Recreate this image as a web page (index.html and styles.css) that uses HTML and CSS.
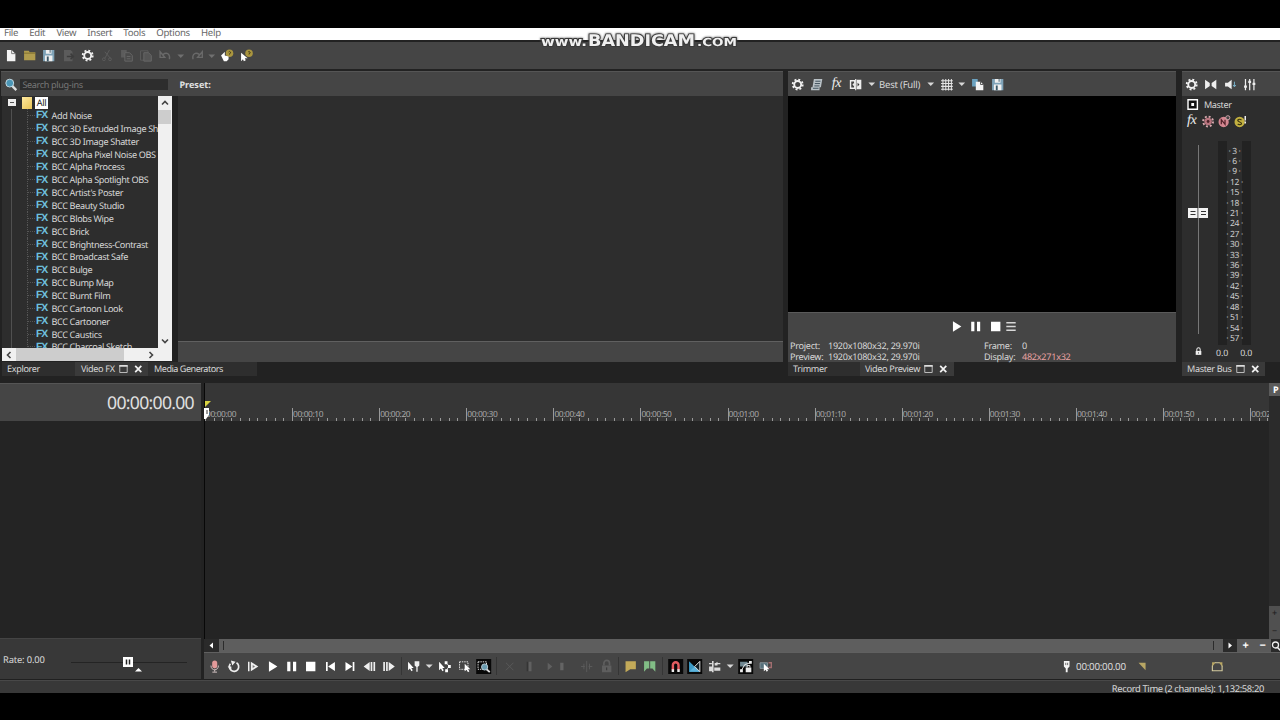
FILE: index.html
```
<!DOCTYPE html>
<html lang="en">
  <head>
    <meta charset="utf-8">
    <title>Video Editor</title>
    <link rel="stylesheet" href="styles.css">
  </head>
  <body>
    <!-- icon set -->
    <svg class="sprite">
      <symbol id="new" viewBox="0 0 16 16"><path d="M4 2h5l4 4v8H4z" fill="#f4f4f4"/><path d="M9 2v4h4" fill="none" stroke="#777"/></symbol>
      <symbol id="open" viewBox="0 0 16 16"><path d="M2 3h5l1 1.500h6V13H2z" fill="#b09c4e"/><path d="M2 5.500h12" stroke="#7d6d2e"/></symbol>
      <symbol id="save" viewBox="0 0 16 16"><path d="M2 2h12v12H2z" fill="#7fa3b8"/><path d="M5 2h6v4H5zM4 8h8v6H4z" fill="#f0f0f0"/><path d="M6 9h2v5H6zM9 2h1v3H9z" fill="#3a5868"/></symbol>
      <symbol id="props" viewBox="0 0 16 16"><path d="M3 2h7l2 2v10H3z" fill="#5c5c5c"/><path d="M6 9h7M10 6l3 3-3 3" fill="none" stroke="#3c3c3c" stroke-width="1.600"/></symbol>
      <symbol id="gear" viewBox="0 0 16 16"><circle cx="8" cy="8" r="3.700" fill="none" stroke="#f2f2f2" stroke-width="2"/><circle cx="8" cy="8" r="5.300" fill="none" stroke="#f2f2f2" stroke-width="2" stroke-dasharray="2.080 2.080"/></symbol>
      <symbol id="cut" viewBox="0 0 16 16"><path d="M11 2 6 11M6 4l6 7" stroke="#5c5c5c" fill="none"/><circle cx="5" cy="12" r="1.500" fill="none" stroke="#5c5c5c"/><circle cx="11.500" cy="12" r="1.500" fill="none" stroke="#5c5c5c"/></symbol>
      <symbol id="copy" viewBox="0 0 16 16"><path d="M2 2h6v8H2z" fill="#5c5c5c"/><path d="M6 5h5l3 3v6H6z" fill="#4a4a4a" stroke="#686868"/><path d="M8 9h4M8 11.500h4" stroke="#686868"/></symbol>
      <symbol id="paste" viewBox="0 0 16 16"><path d="M2.500 3h8v10h-8z" fill="none" stroke="#5c5c5c"/><path d="M6 5h5l3 3v6H6z" fill="#555" stroke="#686868"/></symbol>
      <symbol id="undo" viewBox="0 0 16 16"><path d="M2 4v6h5zM5 7c4-3 8-1 7 5" fill="none" stroke="#696969" stroke-width="1.500"/></symbol>
      <symbol id="redo" viewBox="0 0 16 16"><path d="M14 4v6H9zM11 7c-4-3-8-1-7 5" fill="none" stroke="#696969" stroke-width="1.500"/></symbol>
      <symbol id="hand" viewBox="0 0 16 16"><circle cx="11" cy="5.500" r="4" fill="#a9953f"/><path d="M10 4.300q1-1.300 2 0T11 6v1" fill="none" stroke="#4b4018"/><path d="M2 8l3-3 1-1v4l4 1v3l-2 2H5z" fill="#fff"/></symbol>
      <symbol id="whats" viewBox="0 0 16 16"><circle cx="10.500" cy="5.500" r="4" fill="#a9953f"/><path d="M9.500 4.300q1-1.300 2 0T10.500 6v1" fill="none" stroke="#4b4018"/><path d="M2 5v9l2-2 1 2 2-1-1-2h3z" fill="#fff"/></symbol>
      <symbol id="caret" viewBox="0 0 12 16"><path d="M2.500 6.500h7L6 10z"/></symbol>
      <symbol id="search" viewBox="0 0 16 16"><path d="m9 9 5 5" stroke="#ddd" stroke-width="2.500"/><circle cx="7" cy="6.500" r="4.200" fill="#4b96b6" stroke="#c8dde6"/></symbol>
      <symbol id="script" viewBox="0 0 16 16"><path d="M5 2h9l-1.500 9H11v3H2v-3h1.500z" fill="#b9c1c6"/><path d="M6.500 4.500h5.500M6 7h5.500M5.500 9.500H11M4 12h6" stroke="#394a55"/></symbol>
      <symbol id="split" viewBox="0 0 16 16"><path d="M2.500 4H7v8H2.500z" fill="none" stroke="#eee" stroke-width="1.500"/><path d="M9 3h5v10H9z" fill="#eee"/><path d="M8 2v12" stroke="#eee" stroke-width="1.200"/><path d="m10 6 2 2-2 2z" fill="#333"/><path d="m6.500 6-2 2 2 2z" fill="#eee"/></symbol>
      <symbol id="grid" viewBox="0 0 16 16"><path d="M4 2v12.500M7 2v12.500M10 2v12.500M13 2v12.500M2 4h12.500M2 7h12.500M2 10h12.500M2 13h12.500" stroke="#e4e4e4" stroke-width="1.100"/></symbol>
      <symbol id="snap" viewBox="0 0 16 16"><path d="M2 2h6v8H2z" fill="#6ba2c0"/><path d="M6 5h5l3 3v6H6z" fill="#f3f3f3"/><path d="M11 5v3h3" fill="none" stroke="#555"/></symbol>
      <symbol id="downmix" viewBox="0 0 16 16"><path d="m2 3 5 3.500v3L2 13zM14 3 9 6.500v3l5 3.500z" fill="#eee"/></symbol>
      <symbol id="dim" viewBox="0 0 16 16"><path d="M2 6h3l4-3v10L5 10H2z" fill="#eee"/><path d="M12 5v5M10.500 8.500l1.500 2 1.500-2" fill="none" stroke="#7bb6d0"/></symbol>
      <symbol id="mixer" viewBox="0 0 16 16"><path d="M3.500 2v12M8 2v12M12.500 2v12" stroke="#eee" stroke-width="1.300"/><path d="M2 9h3v2.500H2zM6.500 4h3v2.500h-3zM11 6h3v2.500h-3z" fill="#eee"/></symbol>
      <symbol id="bus" viewBox="0 0 16 16"><path d="M3 3h10v10H3z" fill="#111" stroke="#fff" stroke-width="1.500"/><path d="M6.500 6.500h3v3h-3z" fill="#fff"/></symbol>
      <symbol id="play" viewBox="0 0 16 16"><path d="M4 2.500 13 8l-9 5.500z" fill="#fff"/></symbol>
      <symbol id="pause" viewBox="0 0 16 16"><path d="M3.200 3h3.400v10H3.200zM9.400 3h3.400v10H9.400z" fill="#fff"/></symbol>
      <symbol id="stop" viewBox="0 0 16 16"><path d="M3 3h10v10H3z" fill="#fff"/></symbol>
      <symbol id="menu" viewBox="0 0 12 16"><path d="M1 4h10M1 8h10M1 12h10" stroke="#d8d8d8" stroke-width="1.800"/></symbol>
      <symbol id="max" viewBox="0 0 16 16"><path d="M4 4h8.500v8H4z" fill="none" stroke="#ccc"/><path d="M3.500 4.500h9.500" stroke="#ddd" stroke-width="2"/></symbol>
      <symbol id="close" viewBox="0 0 16 16"><path d="m4.500 4.500 7 7m0-7-7 7" stroke="#f2f2f2" stroke-width="2"/></symbol>
      <symbol id="lock" viewBox="0 0 16 16"><path d="M3 7h10v7H3z" fill="currentColor"/><path d="M5 7V4.500a3 3 0 0 1 6 0V7" fill="none" stroke="currentColor" stroke-width="1.800"/><path d="M8 9v3" stroke="#333"/></symbol>
      <symbol id="mic" viewBox="0 0 16 16"><rect x="5.300" y="1.500" width="5.400" height="8.500" rx="2.700" fill="#e29a9a"/><path d="M4 7c0 6 8 6 8 0M8 11.500v2M5.500 14h5" fill="none" stroke="#d8c8c8"/></symbol>
      <symbol id="loop" viewBox="0 0 16 16"><path d="M11 4a5 5 0 1 1-6.500 1" fill="none" stroke="#eee" stroke-width="1.800"/><path d="m5 1.500 5 1.500-3.500 4zM1.500 8h4v4z" fill="#eee"/></symbol>
      <symbol id="playstart" viewBox="0 0 16 16"><path d="M3 3h1.600v10H3zM6 3l8 5-8 5z" fill="#eee"/><path d="m8 6.500 2.500 1.500L8 9.500z" fill="#777"/></symbol>
      <symbol id="tostart" viewBox="0 0 16 16"><path d="M3 3.200h1.800v9.600H3zM12.500 3.200v9.600L5.200 8z" fill="#fff"/></symbol>
      <symbol id="toend" viewBox="0 0 16 16"><path d="M11.200 3.200H13v9.600h-1.800zM3.500 3.200v9.600L10.800 8z" fill="#fff"/></symbol>
      <symbol id="prev" viewBox="0 0 16 16"><path d="M8 3.200v9.600L1.500 8zM9 3.200h1.800v9.600H9zM12 3.200h1.800v9.600H12z" fill="#eee"/></symbol>
      <symbol id="next" viewBox="0 0 16 16"><path d="M8 3.200v9.600L14.500 8zM2.200 3.200H4v9.600H2.200zM5.200 3.200H7v9.600H5.200z" fill="#eee"/></symbol>
      <symbol id="edit" viewBox="0 0 16 16"><path d="M2 3v9l2-2 1.500 3 1.500-1-1.500-2.500H8z" fill="#fff"/><path d="M9 2.500h5V7l-1.800 1.500v5h-1.400v-5L9 7z" fill="#eee"/></symbol>
      <symbol id="env" viewBox="0 0 16 16"><path d="M2 3v9l2-2 1.500 3 1.500-1-1.500-2.500H8z" fill="#fff"/><path d="m9 4 4 3.500-3 4" fill="none" stroke="#ccc"/><path d="M8 2.500h3v3H8zM11.500 6.500h3v3h-3zM8.500 11h3v3h-3z" fill="#fff"/></symbol>
      <symbol id="select" viewBox="0 0 16 16"><path d="M2.500 3h9v8h-9z" fill="none" stroke="#eee" stroke-dasharray="1.500 1"/><path d="M8 5v8l2-1.500 1.500 2.500 1.500-1-1.500-2H14z" fill="#fff"/></symbol>
      <symbol id="zoomtool" viewBox="0 0 16 16"><path d="M0 0h16v16H0z" fill="#080808"/><path d="M2 3h9v8H2z" fill="none" stroke="#eee" stroke-dasharray="1.500 1"/><path d="m11 11 3.500 3" stroke="#ddd" stroke-width="2"/><circle cx="9" cy="8.500" r="3.300" fill="#6a9cb0" stroke="#b9ccd5"/></symbol>
      <symbol id="del" viewBox="0 0 16 16"><path d="m4 4 8 8m0-8-8 8" stroke="#5a5a5a"/></symbol>
      <symbol id="trimstart" viewBox="0 0 16 16"><path d="M8 3h3v10H8z" fill="#606060"/><path d="M6.500 3v10" stroke="#303030"/></symbol>
      <symbol id="trimend" viewBox="0 0 16 16"><path d="m8 4 5 4-5 4z" fill="#606060"/></symbol>
      <symbol id="trimmid" viewBox="0 0 16 16"><path d="M0 4h3.500v8H0z" fill="#646464"/></symbol>
      <symbol id="splitev" viewBox="0 0 16 16"><path d="M8 2v12M2 8h4M10 8h4M5 5v6M11 5v6" stroke="#5c5c5c"/></symbol>
      <symbol id="marker" viewBox="0 0 16 16"><path d="M2.500 2.500h11v8.500H7.500l-5 3z" fill="#c3aa59"/></symbol>
      <symbol id="region" viewBox="0 0 16 16"><path d="M2 2.500h5.500V10H5l-3 3.500zM8.500 2.500H14v11L11 10H8.500z" fill="#82bd86"/></symbol>
      <symbol id="magnet" viewBox="0 0 16 16"><path d="M0 0h16v16H0z" fill="#080808"/><path d="M5 12V6.500a3 3 0 0 1 6 0V12" fill="none" stroke="#e25c60" stroke-width="2.600"/><path d="M3.700 11h2.600v2.800H3.700zM9.700 11h2.600v2.800H9.700z" fill="#eee"/></symbol>
      <symbol id="fade" viewBox="0 0 16 16"><path d="M0 0h16v16H0z" fill="#080808"/><path d="M2 2.500 13.500 13.500H2z" fill="#3d9bc6"/><path d="M2 13.500 8 8l5.500 5.500z" fill="#5db4dc"/><path d="M13.500 2.500 8 8l5.500 5.500z" fill="#0d1b22" stroke="#eee"/></symbol>
      <symbol id="ripple" viewBox="0 0 16 16"><path d="M6 2v12" stroke="#eee" stroke-width="1.500"/><path d="M2 8h4v5H2zM7.500 9H14v3.500H7.500zM11 3v4H8V5z" fill="#ddd"/><path d="M8 5h6M2 5h3" stroke="#ddd" stroke-width="1.300"/></symbol>
      <symbol id="lockenv" viewBox="0 0 16 16"><path d="M0 0h16v16H0z" fill="#080808"/><path d="M2 3h8v5H2z" fill="#6f8791"/><path d="m3 13 4-7 6-2" fill="none" stroke="#eee"/><path d="M2 11h3v3H2zM11.500 2h3v3h-3zM8 9h6v5H8z" fill="#eee"/><path d="M9.500 9V7h3v2" fill="none" stroke="#eee"/></symbol>
      <symbol id="ignore" viewBox="0 0 16 16"><path d="M2 4h8v6H2z" fill="#56707b" stroke="#87949b"/><path d="M11 4h3v5h-3" fill="none" stroke="#a26e70" stroke-width="1.500"/><path d="M6 5v8l2-1.500 1 2 1.500-1L9.500 11H12z" fill="#fff"/></symbol>
      <symbol id="pin" viewBox="0 0 16 16"><path d="M5 2h6v6L9 10v4H7v-4L5 8z" fill="#f4f4f4"/><path d="M7 4v2.500M9 4v2.500" stroke="#666"/></symbol>
      <symbol id="selstart" viewBox="0 0 16 16"><path d="M2.500 4H10v8z" fill="#b8a664"/></symbol>
      <symbol id="sellen" viewBox="0 0 16 16"><path d="M2 3.500h4L2 8.500zM13 3.500H9l4 5z" fill="#b8a664"/><path d="M5 4h5M2.300 7v5.500h10.400V7" fill="none" stroke="#d3ca9e" stroke-width="1.200"/></symbol>
      <symbol id="fader" viewBox="0 0 20 10"><path d="M0 0h9.500v10H0zM10.500 0H20v10h-9.500z" fill="#f2f2f2"/><path d="M2.500 3.500h5M2.500 6.500h5M13 3.500h5M13 6.500h5" stroke="#333"/></symbol>
      <symbol id="auto" viewBox="0 0 16 16"><circle cx="8" cy="8" r="4" fill="#b6737d"/><circle cx="8" cy="8" r="5.300" fill="none" stroke="#d9a8af" stroke-width="2" stroke-dasharray="2.080 2.080"/><circle cx="8" cy="8" r="1.500" fill="#4a2228"/></symbol>
      <symbol id="mute" viewBox="0 0 16 16"><circle cx="7.500" cy="8.500" r="5.500" fill="#d48791"/><path d="M5 11V6l4 5V6" fill="none" stroke="#502028" stroke-width="1.300"/><circle cx="12" cy="4" r="2.200" fill="#444" stroke="#d8a9af"/></symbol>
      <symbol id="solo" viewBox="0 0 16 16"><circle cx="7.500" cy="8.500" r="5.500" fill="#c2b040"/><path d="M9.500 6.500C8 5 5.500 5.500 5.500 7s4 1.500 4 3-3 2-4 .5" fill="none" stroke="#3e3810" stroke-width="1.300"/><path d="M13.500 2v5M13.500 8v2" stroke="#eee" stroke-width="1.600"/></symbol>
    </svg>

    <div class="menubar">
      <span>File</span><span>Edit</span><span>View</span><span>Insert</span><span>Tools</span><span>Options</span><span>Help</span>
    </div>
    <svg class="watermark" viewBox="0 0 204 24">
      <text x="4" y="15" textLength="46" lengthAdjust="spacingAndGlyphs" class="wm-small">www.</text>
      <text x="51" y="15" textLength="107" lengthAdjust="spacingAndGlyphs" class="wm-big">BANDICAM</text>
      <text x="160" y="15" textLength="40" lengthAdjust="spacingAndGlyphs" class="wm-com">.COM</text>
    </svg>

    <div class="toolbar main-toolbar">
      <svg class="icon"><use href="#new"/></svg>
      <svg class="icon"><use href="#open"/></svg>
      <svg class="icon"><use href="#save"/></svg>
      <svg class="icon"><use href="#props"/></svg>
      <svg class="icon"><use href="#gear"/></svg>
      <svg class="icon"><use href="#cut"/></svg>
      <svg class="icon"><use href="#copy"/></svg>
      <svg class="icon"><use href="#paste"/></svg>
      <svg class="icon"><use href="#undo"/></svg>
      <svg class="caret off"><use href="#caret"/></svg>
      <svg class="icon"><use href="#redo"/></svg>
      <svg class="caret off"><use href="#caret"/></svg>
      <svg class="icon"><use href="#hand"/></svg>
      <svg class="icon"><use href="#whats"/></svg>
    </div>

    <div class="docks">
      <div class="dock dock-fx">
        <div class="panel-head">
          <svg class="icon"><use href="#search"/></svg>
          <div class="search">Search plug-ins</div>
          <b class="preset">Preset:</b>
        </div>
        <div class="fx-body">
          <div class="fx-list">
            <div class="fx-scroll">
              <div class="tree">
                <div class="root"><i class="minus"></i><i class="folder"></i><span>All</span></div>
                <div class="items">
                  <div><b>FX</b>Add Noise</div>
                  <div><b>FX</b>BCC 3D Extruded Image Shatter</div>
                  <div><b>FX</b>BCC 3D Image Shatter</div>
                  <div><b>FX</b>BCC Alpha Pixel Noise OBS</div>
                  <div><b>FX</b>BCC Alpha Process</div>
                  <div><b>FX</b>BCC Alpha Spotlight OBS</div>
                  <div><b>FX</b>BCC Artist's Poster</div>
                  <div><b>FX</b>BCC Beauty Studio</div>
                  <div><b>FX</b>BCC Blobs Wipe</div>
                  <div><b>FX</b>BCC Brick</div>
                  <div><b>FX</b>BCC Brightness-Contrast</div>
                  <div><b>FX</b>BCC Broadcast Safe</div>
                  <div><b>FX</b>BCC Bulge</div>
                  <div><b>FX</b>BCC Bump Map</div>
                  <div><b>FX</b>BCC Burnt Film</div>
                  <div><b>FX</b>BCC Cartoon Look</div>
                  <div><b>FX</b>BCC Cartooner</div>
                  <div><b>FX</b>BCC Caustics</div>
                  <div><b>FX</b>BCC Charcoal Sketch</div>
                </div>
              </div>
              <div class="vscroll">
                <svg viewBox="0 0 14 14"><path d="m4 8.500 3-3 3 3"/></svg>
                <div class="thumb"></div>
                <svg class="down" viewBox="0 0 14 14"><path d="m4 5.500 3 3 3-3"/></svg>
              </div>
            </div>
            <div class="hscroll">
              <svg viewBox="0 0 14 14"><path d="M8.500 4l-3 3 3 3"/></svg>
              <div class="thumb"></div>
              <svg class="right" viewBox="0 0 14 14"><path d="m5.500 4 3 3-3 3"/></svg>
            </div>
          </div>
          <div class="preset-view"><div class="preset-foot"></div></div>
        </div>
        <div class="tabs">
          <div class="tab tab-explorer">Explorer</div>
          <div class="tab active">Video FX <svg><use href="#max"/></svg><svg><use href="#close"/></svg></div>
          <div class="tab tab-media">Media Generators</div>
        </div>
      </div>

      <div class="dock dock-preview">
        <div class="panel-head">
          <svg class="icon"><use href="#gear"/></svg>
          <svg class="icon"><use href="#script"/></svg>
          <span class="icon fx">fx</span>
          <svg class="icon"><use href="#split"/></svg>
          <svg class="caret"><use href="#caret"/></svg>
          <span class="quality">Best (Full)</span>
          <svg class="caret"><use href="#caret"/></svg>
          <svg class="icon"><use href="#grid"/></svg>
          <svg class="caret"><use href="#caret"/></svg>
          <svg class="icon"><use href="#snap"/></svg>
          <svg class="icon"><use href="#save"/></svg>
        </div>
        <div class="screen"></div>
        <div class="preview-foot">
          <div class="controls">
            <svg class="icon"><use href="#play"/></svg>
            <svg class="icon"><use href="#pause"/></svg>
            <svg class="icon"><use href="#stop"/></svg>
            <svg class="icon small"><use href="#menu"/></svg>
          </div>
          <div class="info">
            <span>Project:</span><span>1920x1080x32, 29.970i</span><span>Frame:</span><span>0</span>
            <span>Preview:</span><span>1920x1080x32, 29.970i</span><span>Display:</span><span class="warn">482x271x32</span>
          </div>
        </div>
        <div class="tabs">
          <div class="tab tab-trimmer">Trimmer</div>
          <div class="tab active">Video Preview <svg><use href="#max"/></svg><svg><use href="#close"/></svg></div>
        </div>
      </div>

      <div class="dock dock-master">
        <div class="panel-head">
          <svg class="icon"><use href="#gear"/></svg>
          <svg class="icon"><use href="#downmix"/></svg>
          <svg class="icon"><use href="#dim"/></svg>
          <svg class="icon"><use href="#mixer"/></svg>
        </div>
        <div class="master-body">
          <div class="master-name"><svg class="icon"><use href="#bus"/></svg>Master</div>
          <div class="master-icons">
            <span class="icon fx">fx</span>
            <svg class="icon"><use href="#auto"/></svg>
            <svg class="icon"><use href="#mute"/></svg>
            <svg class="icon"><use href="#solo"/></svg>
          </div>
          <div class="meters">
            <div class="slider"><svg class="fader"><use href="#fader"/></svg></div>
            <div class="scale">
              <span>3</span><span>6</span><span>9</span><span>12</span><span>15</span><span>18</span><span>21</span><span>24</span><span>27</span><span>30</span><span>33</span><span>36</span><span>39</span><span>42</span><span>45</span><span>48</span><span>51</span><span>54</span><span>57</span>
            </div>
          </div>
          <div class="levels"><svg class="lock"><use href="#lock"/></svg><span>0.0</span><span>0.0</span></div>
        </div>
        <div class="tabs">
          <div class="tab active">Master Bus <svg><use href="#max"/></svg><svg><use href="#close"/></svg></div>
        </div>
      </div>
    </div>

    <div class="timeline">
      <div class="track-col">
        <div class="timecode">00:00:00.00</div>
        <div class="track-list"></div>
        <div class="rate">
          <span>Rate: 0.00</span>
          <div class="rate-line">
            <svg class="rate-knob" viewBox="0 0 22 18"><path d="M1 1h10v10H1z" fill="#fff"/><path d="M4.500 3.500v5M7.500 3.500v5" stroke="#222" stroke-width="1.500"/><path d="m13 15.500 3.500-3.500 3.500 3.500z" fill="#fff"/></svg>
          </div>
        </div>
      </div>
      <div class="time-col">
        <div class="time-main">
          <div class="time-view">
            <div class="ruler">
              <div>00:00:00</div><div>00:00:10</div><div>00:00:20</div><div>00:00:30</div><div>00:00:40</div><div>00:00:50</div><div>00:01:00</div><div>00:01:10</div><div>00:01:20</div><div>00:01:30</div><div>00:01:40</div><div>00:01:50</div><div>00:02:00</div>
            </div>
            <svg class="cursor" viewBox="0 0 10 24"><path d="M1 3h6L1 9z" fill="#d9d341"/><path d="M0 10h5v7l-3 4H0z" fill="#fff"/><path d="M3 12v4" stroke="#333"/></svg>
            <div class="tracks"></div>
          </div>
          <div class="side">
            <div class="flag">P</div>
            <div class="zoom-v"><span>+</span><span>−</span></div>
          </div>
        </div>
        <div class="time-scroll">
          <svg class="sb" viewBox="0 0 14 14"><path d="M9 3.500v6L5.500 6.500z" fill="#fff"/></svg>
          <div class="bar"></div>
          <svg class="sb" viewBox="0 0 14 14"><path d="M5.500 3.500v6L9 6.500z" fill="#fff"/></svg>
          <div class="zoom-h"><span>+</span><span>−</span></div>
          <svg class="sb" viewBox="0 0 14 14"><circle cx="4.500" cy="6" r="3" fill="none" stroke="#eee" stroke-width="1.300"/><path d="m6.500 8.500 3 3" stroke="#eee" stroke-width="1.500"/></svg>
        </div>
        <div class="toolbar transport">
          <svg class="icon"><use href="#mic"/></svg>
          <svg class="icon"><use href="#loop"/></svg>
          <svg class="icon"><use href="#playstart"/></svg>
          <svg class="icon"><use href="#play"/></svg>
          <svg class="icon"><use href="#pause"/></svg>
          <svg class="icon"><use href="#stop"/></svg>
          <svg class="icon"><use href="#tostart"/></svg>
          <svg class="icon"><use href="#toend"/></svg>
          <svg class="icon"><use href="#prev"/></svg>
          <svg class="icon"><use href="#next"/></svg>
          <i class="sep"></i>
          <svg class="icon"><use href="#edit"/></svg>
          <svg class="caret"><use href="#caret"/></svg>
          <svg class="icon"><use href="#env"/></svg>
          <svg class="icon"><use href="#select"/></svg>
          <svg class="icon"><use href="#zoomtool"/></svg>
          <i class="sep wide"></i>
          <svg class="icon"><use href="#del"/></svg>
          <svg class="icon"><use href="#trimstart"/></svg>
          <svg class="icon"><use href="#trimend"/></svg>
          <svg class="icon"><use href="#trimmid"/></svg>
          <svg class="icon"><use href="#splitev"/></svg>
          <svg class="icon off"><use href="#lock"/></svg>
          <i class="sep"></i>
          <svg class="icon"><use href="#marker"/></svg>
          <svg class="icon"><use href="#region"/></svg>
          <i class="sep wide"></i>
          <svg class="icon"><use href="#magnet"/></svg>
          <svg class="icon"><use href="#fade"/></svg>
          <svg class="icon"><use href="#ripple"/></svg>
          <svg class="caret"><use href="#caret"/></svg>
          <svg class="icon"><use href="#lockenv"/></svg>
          <svg class="icon"><use href="#ignore"/></svg>
          <div class="position">
            <svg class="icon"><use href="#pin"/></svg>
            <span>00:00:00.00</span>
            <svg class="icon"><use href="#selstart"/></svg>
            <svg class="icon sel-len"><use href="#sellen"/></svg>
          </div>
        </div>
      </div>
    </div>

    <div class="statusbar">Record Time (2 channels): 1,132:58:20</div>
  </body>
</html>
```
FILE: styles.css
```
* {
  box-sizing: border-box;
}
body {
  margin: 0;
  width: 1280px;
  height: 720px;
  overflow: hidden;
  padding: 28px 0 27px;
  display: flex;
  flex-direction: column;
  background: #000;
  color: #d8d8d8;
  font-family: "Noto Sans", "Open Sans", sans-serif;
  font-size: 9.1px;
  letter-spacing: -0.35px;
  line-height: 13px;
  white-space: nowrap;
  text-rendering: geometricPrecision;
}
svg {
  display: block;
  flex: none;
}
.sprite {
  position: absolute;
  width: 0;
  height: 0;
}
.icon {
  flex: none;
  width: 19.4px;
  height: 15px;
}
.caret {
  width: 11.5px;
  height: 16px;
  fill: #d8d8d8;
}
.off {
  fill: #707070;
  color: #5e5e5e;
}
.fx {
  font: italic 14px/14px "Liberation Serif", serif;
  color: #eee;
  text-align: center;
}

/* menu */
.menubar {
  flex: none;
  height: 12px;
  display: flex;
  gap: 11.1px;
  padding-left: 4px;
  background: #fff;
  color: #666;
  font-size: 9.6px;
  line-height: 9px;
  letter-spacing: -0.29px;
}
.watermark {
  position: absolute;
  left: 537px;
  top: 31px;
  width: 204px;
  height: 24px;
  overflow: visible;
  fill: #f0f0f0;
  stroke: #3a3a3a;
  stroke-width: 1.8px;
  paint-order: stroke;
  font-family: "DejaVu Sans", sans-serif;
  letter-spacing: 0;
  filter: drop-shadow(0 0 1px #444);
}
.wm-small {
  font-size: 13px;
  font-weight: bold;
}
.wm-big {
  font-size: 16px;
  font-weight: bold;
}
.wm-com {
  font-size: 11px;
  font-weight: bold;
}
.toolbar {
  flex: none;
  display: flex;
  align-items: center;
  background: #454545;
}
.main-toolbar {
  height: 31px;
  border-top: 2px solid #222;
  border-bottom: 2px solid #222;
  padding-left: 0.5px;
}

/* docked windows */
.docks {
  flex: none;
  height: 312px;
  display: flex;
  background: #222;
}
.dock {
  display: flex;
  flex-direction: column;
  height: 305px;
}
.panel-head {
  flex: none;
  height: 25px;
  display: flex;
  align-items: center;
  background: #454545;
  border-top: 1px solid #555;
}
.tabs {
  flex: none;
  display: flex;
  height: 14px;
}
.tab {
  display: flex;
  align-items: center;
  background: #2e2e2e;
  line-height: 12px;
}
.tab.active {
  background: #3a3a3a;
}
.tab svg {
  width: 14.5px;
  height: 14px;
}
.tab svg:first-of-type {
  margin-left: 1.5px;
}
.dock-fx {
  width: 783px;
  padding-left: 2px;
  margin-right: 5px;
}
.dock-fx .panel-head {
  margin-left: -1px;
}
.search {
  width: 148px;
  height: 11px;
  padding-left: 2px;
  background: #2d2d2d;
  color: #777;
  line-height: 11px;
  letter-spacing: -0.35px;
}
.preset {
  margin-left: 11px;
  color: #e0e0e0;
  letter-spacing: 0;
}
.fx-body {
  height: 266px;
  display: flex;
}
.fx-list {
  width: 170px;
  margin-right: 6px;
}
.fx-scroll {
  height: 252px;
  display: flex;
}
.tree {
  width: 156px;
  overflow: hidden;
  background: #2d2d2d;
}
.root {
  height: 13px;
  display: flex;
  align-items: center;
}
.minus {
  width: 8px;
  height: 7px;
  margin-left: 6px;
  background: linear-gradient(#555, #555) center / 4px 1px no-repeat #eee;
}
.folder {
  width: 10px;
  height: 12px;
  margin: 0 3px 0 6px;
  background: linear-gradient(135deg, #ffe9a0, #e9c455);
}
.root span {
  width: 13px;
  height: 12px;
  background: #fff;
  color: #222;
  text-align: center;
  line-height: 12px;
}
.items {
  margin-left: 9px;
  padding-left: 15px;
  border-left: 1px solid #505050;
}
.items div {
  height: 12.87px;
  display: flex;
  align-items: center;
  border-left: 1px dotted #555;
  letter-spacing: -0.37px;
}
.items div::before {
  content: "";
  flex: none;
  width: 7px;
  margin-right: 1px;
  border-top: 1px dotted #555;
}
.items b {
  flex: none;
  width: 15.5px;
  padding-top: 1px;
  color: #6fc0de;
  font-family: "Liberation Sans", sans-serif;
  font-size: 10.5px;
  letter-spacing: -1.2px;
  font-weight: bold;
}
.vscroll,
.hscroll {
  display: flex;
  background: #f0f0f0;
}
.vscroll {
  width: 14px;
  flex-direction: column;
}
.vscroll svg,
.hscroll svg {
  width: 14px;
  height: 14px;
  fill: none;
  stroke: #444;
  stroke-width: 1.6px;
}
.vscroll .thumb {
  height: 14px;
  margin-right: 1px;
  background: #cdcdcd;
}
.vscroll .down {
  margin-top: auto;
}
.hscroll {
  height: 13px;
  padding-right: 14px;
}
.hscroll .thumb {
  width: 108px;
  background: #cdcdcd;
}
.hscroll .right {
  margin-left: auto;
}
.preset-view {
  flex: 1;
  display: flex;
  align-items: flex-end;
  background: #2d2d2d;
}
.preset-foot {
  flex: 1;
  height: 21px;
  background: #454545;
  border-top: 1px solid #606060;
}
.tab-explorer {
  width: 73px;
  padding-left: 5px;
}
.dock-fx .active {
  width: 73px;
  padding-left: 6px;
}
.tab-media {
  width: 109px;
  padding-left: 6px;
  letter-spacing: -0.5px;
}

.dock-preview {
  width: 388px;
  margin-right: 6px;
}
.quality {
  width: 44px;
  margin-left: 2px;
  font-size: 9.6px;
  letter-spacing: -0.25px;
}
.quality + .caret {
  margin-left: 2px;
}
.quality + .caret + .icon + .caret {
  margin: 0 0.5px 0 0.5px;
}
.screen {
  height: 216px;
  background: #000;
}
.preview-foot {
  height: 50px;
  background: #454545;
  border-top: 1px solid #5a5a5a;
}
.controls {
  display: flex;
  height: 26px;
  align-items: center;
  padding-left: 159px;
}
.controls .small {
  width: 12px;
}
.info {
  display: grid;
  grid-template-columns: 38px 156px 38px 1fr;
  padding: 2px 0 0 2px;
  line-height: 10.5px;
}
.info span {
  letter-spacing: -0.27px;
}
.info .warn {
  color: #e9a2a2;
}
.tab-trimmer {
  width: 72px;
  padding-left: 5px;
}
.dock-preview .active {
  width: 94px;
  padding-left: 5px;
}

.dock-master {
  flex: 1;
}
.master-body {
  height: 266px;
  background: #2d2d2d;
}
.master-name {
  display: flex;
  align-items: center;
  height: 16px;
  gap: 1.5px;
  padding-left: 1px;
}
.master-icons {
  display: flex;
  height: 18px;
  align-items: center;
  padding-left: 1.5px;
}
.master-icons .icon {
  width: 16.2px;
}
.meters {
  display: flex;
  height: 216px;
  padding-top: 11px;
}
.slider {
  width: 20px;
  height: 189px;
  margin: 4px 0 0 6px;
  background: linear-gradient(#777, #777) center / 1px 100% no-repeat;
}
.fader {
  width: 20px;
  height: 10px;
  margin-top: 63px;
}
.scale {
  display: flex;
  flex-direction: column;
  width: 33px;
  height: 204px;
  margin-left: 10px;
  padding-top: 5.6px;
  background: linear-gradient(90deg, #222 9px, transparent 9px 24px, #222 24px);
  font-size: 8.5px;
  line-height: 10.4px;
  text-align: center;
  color: #ccc;
}
.scale span::before {
  content: "· ";
}
.scale span::after {
  content: " ·";
}
.levels {
  display: flex;
  align-items: center;
  gap: 12px;
  font-size: 8.8px;
}
.levels .lock {
  width: 9px;
  height: 9px;
  margin: -4px 1px 0 12px;
  color: #eee;
}
.levels span {
  padding-top: 1px;
  letter-spacing: -0.1px;
}
.dock-master .active {
  width: 83px;
  padding-left: 5px;
}

/* timeline */
.timeline {
  flex: none;
  height: 297px;
  display: flex;
  background: #222;
}
.track-col {
  width: 201px;
  margin-right: 3px;
  display: flex;
  flex-direction: column;
}
.timecode {
  height: 38px;
  padding-right: 7px;
  background: #454545;
  border-top: 1px solid #555;
  color: #e0e0e0;
  font-size: 17.6px;
  line-height: 38px;
  letter-spacing: -0.7px;
  text-align: right;
}
.track-list {
  flex: 1;
  background: #242424;
}
.rate {
  height: 42px;
  display: flex;
  align-items: center;
  padding: 1px 0 0 3px;
  background: #383838;
  border-top: 1px solid #444;
  border-bottom: 1px solid #202020;
  font-size: 9.4px;
  letter-spacing: -0.17px;
}
.rate-line {
  width: 116px;
  height: 18px;
  margin: 10px 0 0 26px;
  padding-left: 51px;
  background: linear-gradient(#242424, #242424) 0 6px / 100% 1px no-repeat;
}
.rate-knob {
  width: 22px;
  height: 18px;
}
.time-col {
  flex: 1;
  min-width: 0;
  display: flex;
  flex-direction: column;
}
.time-main {
  height: 256px;
  display: flex;
}
.time-view {
  position: relative;
  width: 1065px;
  border-left: 1px solid #080808;
}
.ruler {
  height: 38px;
  padding-top: 25px;
  display: flex;
  overflow: hidden;
  background: #363636;
}
.ruler div {
  flex: none;
  width: 87.1px;
  height: 13px;
  border-left: 1px solid #999;
  background: repeating-linear-gradient(90deg, #999 0 1px, transparent 1px 8.71px) -1px 10px / 100% 3px no-repeat;
  color: #aaa;
  font-size: 8.4px;
  line-height: 13px;
  letter-spacing: -0.4px;
}
.cursor {
  position: absolute;
  left: -1px;
  top: 15px;
  width: 10px;
  height: 24px;
}
.tracks {
  height: 218px;
  background: #242424;
}
.side {
  flex: 1;
  display: flex;
  flex-direction: column;
  justify-content: space-between;
  background: #2b2b2b;
}
.flag {
  height: 13px;
  padding-left: 4px;
  background: #5b5b5b;
  color: #fff;
  font-weight: bold;
}
.zoom-v {
  height: 33px;
  display: flex;
  flex-direction: column;
  align-items: center;
  gap: 5px;
  background: #505050;
  color: #1c1c1c;
}
.time-scroll {
  height: 13px;
  display: flex;
  background: #2a2a2a;
}
.sb {
  width: 14px;
  height: 14px;
}
.bar {
  flex: none;
  width: 1004px;
  margin-left: 1px;
  background: linear-gradient(90deg, transparent 4px, #2b2b2b 4px 5px, transparent 5px 994px, #2b2b2b 994px 995px, transparent 995px) 0 2px / 100% 9px no-repeat #5e5e5e;
}
.zoom-h {
  flex: none;
  width: 34px;
  display: flex;
  justify-content: space-around;
  background: #5a5a5a;
  color: #fff;
  font-size: 11px;
  font-weight: bold;
}
.transport {
  height: 28px;
  border-top: 1px solid #606060;
  border-bottom: 1px solid #202020;
  padding-left: 0.5px;
}
.sep {
  width: 1px;
  height: 18px;
  margin: 0 2.1px;
  background: #353535;
}
.sep.wide {
  margin: 0 2.5px;
}
.transport .caret {
  width: 12.4px;
}
.position {
  display: flex;
  align-items: center;
  margin-left: 281.5px;
}
.position span {
  width: 58px;
  font-size: 9.8px;
  letter-spacing: -0.28px;
}
.sel-len {
  margin-left: 55px;
}
.statusbar {
  flex: none;
  height: 13px;
  padding-right: 16px;
  background: #383838;
  border-top: 1px solid #484848;
  text-align: right;
  font-size: 9.4px;
  letter-spacing: -0.36px;
  line-height: 15px;
}
```
